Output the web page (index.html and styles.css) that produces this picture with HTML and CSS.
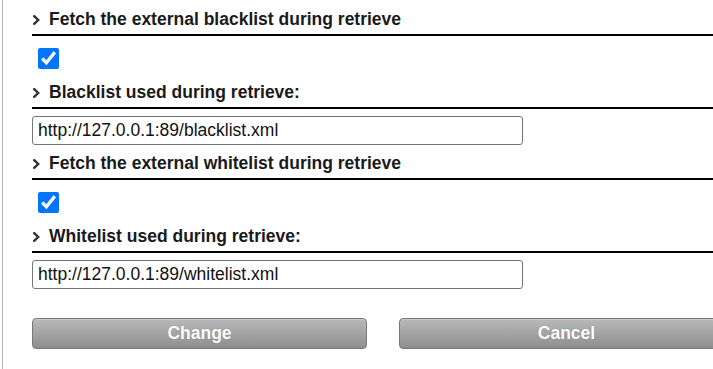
FILE: index.html
```html
<!DOCTYPE html>
<html lang="en">
<head>
<meta charset="utf-8">
<title>Blacklist settings</title>
<link rel="stylesheet" href="styles.css">
</head>
<body>
<div class="page">
  <form class="settings">
    <div class="field">
      <h3 class="field-title"><svg class="chev" viewBox="0 0 7 10" width="7" height="10"><polyline points="1.2,1.2 5.2,5 1.2,8.8"/></svg>Fetch the external blacklist during retrieve</h3>
      <input class="check" type="checkbox" checked>
    </div>
    <div class="field">
      <h3 class="field-title"><svg class="chev" viewBox="0 0 7 10" width="7" height="10"><polyline points="1.2,1.2 5.2,5 1.2,8.8"/></svg>Blacklist used during retrieve:</h3>
      <input class="text" type="text" value="http://127.0.0.1:89/blacklist.xml">
    </div>
    <div class="field">
      <h3 class="field-title"><svg class="chev" viewBox="0 0 7 10" width="7" height="10"><polyline points="1.2,1.2 5.2,5 1.2,8.8"/></svg>Fetch the external whitelist during retrieve</h3>
      <input class="check" type="checkbox" checked>
    </div>
    <div class="field">
      <h3 class="field-title"><svg class="chev" viewBox="0 0 7 10" width="7" height="10"><polyline points="1.2,1.2 5.2,5 1.2,8.8"/></svg>Whitelist used during retrieve:</h3>
      <input class="text" type="text" value="http://127.0.0.1:89/whitelist.xml">
    </div>
    <div class="actions">
      <button type="button" class="btn">Change</button>
      <button type="button" class="btn">Cancel</button>
    </div>
  </form>
</div>
</body>
</html>
```
FILE: styles.css
```css
html, body {
  margin: 0;
  padding: 0;
  overflow: hidden;
  background: #fff;
}
body {
  font-family: "Liberation Sans", Arial, sans-serif;
  font-size: 17.5px;
  color: #1a1a1a;
}
.page {
  margin-left: 2px;
  border-left: 1px solid #b4b4b4;
  min-height: 369px;
  box-sizing: border-box;
  padding: 1px 0 0 29px;
  width: 711px;
  overflow: hidden;
}
.settings {
  display: flex;
  flex-direction: column;
}
.field {
  display: flex;
  flex-direction: column;
  align-items: flex-start;
}
.field-title {
  align-self: stretch;
  display: flex;
  align-items: center;
  margin: 0;
  padding: 8px 0 5px 1px;
  line-height: 20px;
  font-size: 17.5px;
  font-weight: bold;
  color: #1a1a1a;
  border-bottom: 2px solid #000;
}
.chev {
  flex: none;
  margin-right: 9px;
  margin-top: 1px;
}
.chev polyline {
  fill: none;
  stroke: #333;
  stroke-width: 2.4;
  stroke-linecap: square;
}
.check {
  width: 21px;
  height: 21px;
  margin: 12px 0 5px 6px;
  accent-color: #0075ff;
}
.text {
  box-sizing: border-box;
  width: 491px;
  height: 29px;
  margin: 7px 0 0 0;
  padding: 0 5px;
  border: 1px solid #767676;
  border-radius: 3px;
  font-family: "Liberation Sans", Arial, sans-serif;
  font-size: 17.5px;
  color: #111;
  background: #fff;
}
.actions {
  display: grid;
  grid-template-columns: 335px 335px;
  column-gap: 32px;
  margin-top: 29px;
}
.btn {
  height: 31px;
  border: 1px solid #787878;
  border-radius: 4px;
  background: linear-gradient(#b9b9b9, #8e8e8e);
  box-shadow: inset 0 1px 0 rgba(255,255,255,0.25);
  color: #fff;
  font-family: "Liberation Sans", Arial, sans-serif;
  font-size: 17.5px;
  font-weight: bold;
  text-shadow: 0 0 1px rgba(0,0,0,0.25);
  padding: 0;
}
```
